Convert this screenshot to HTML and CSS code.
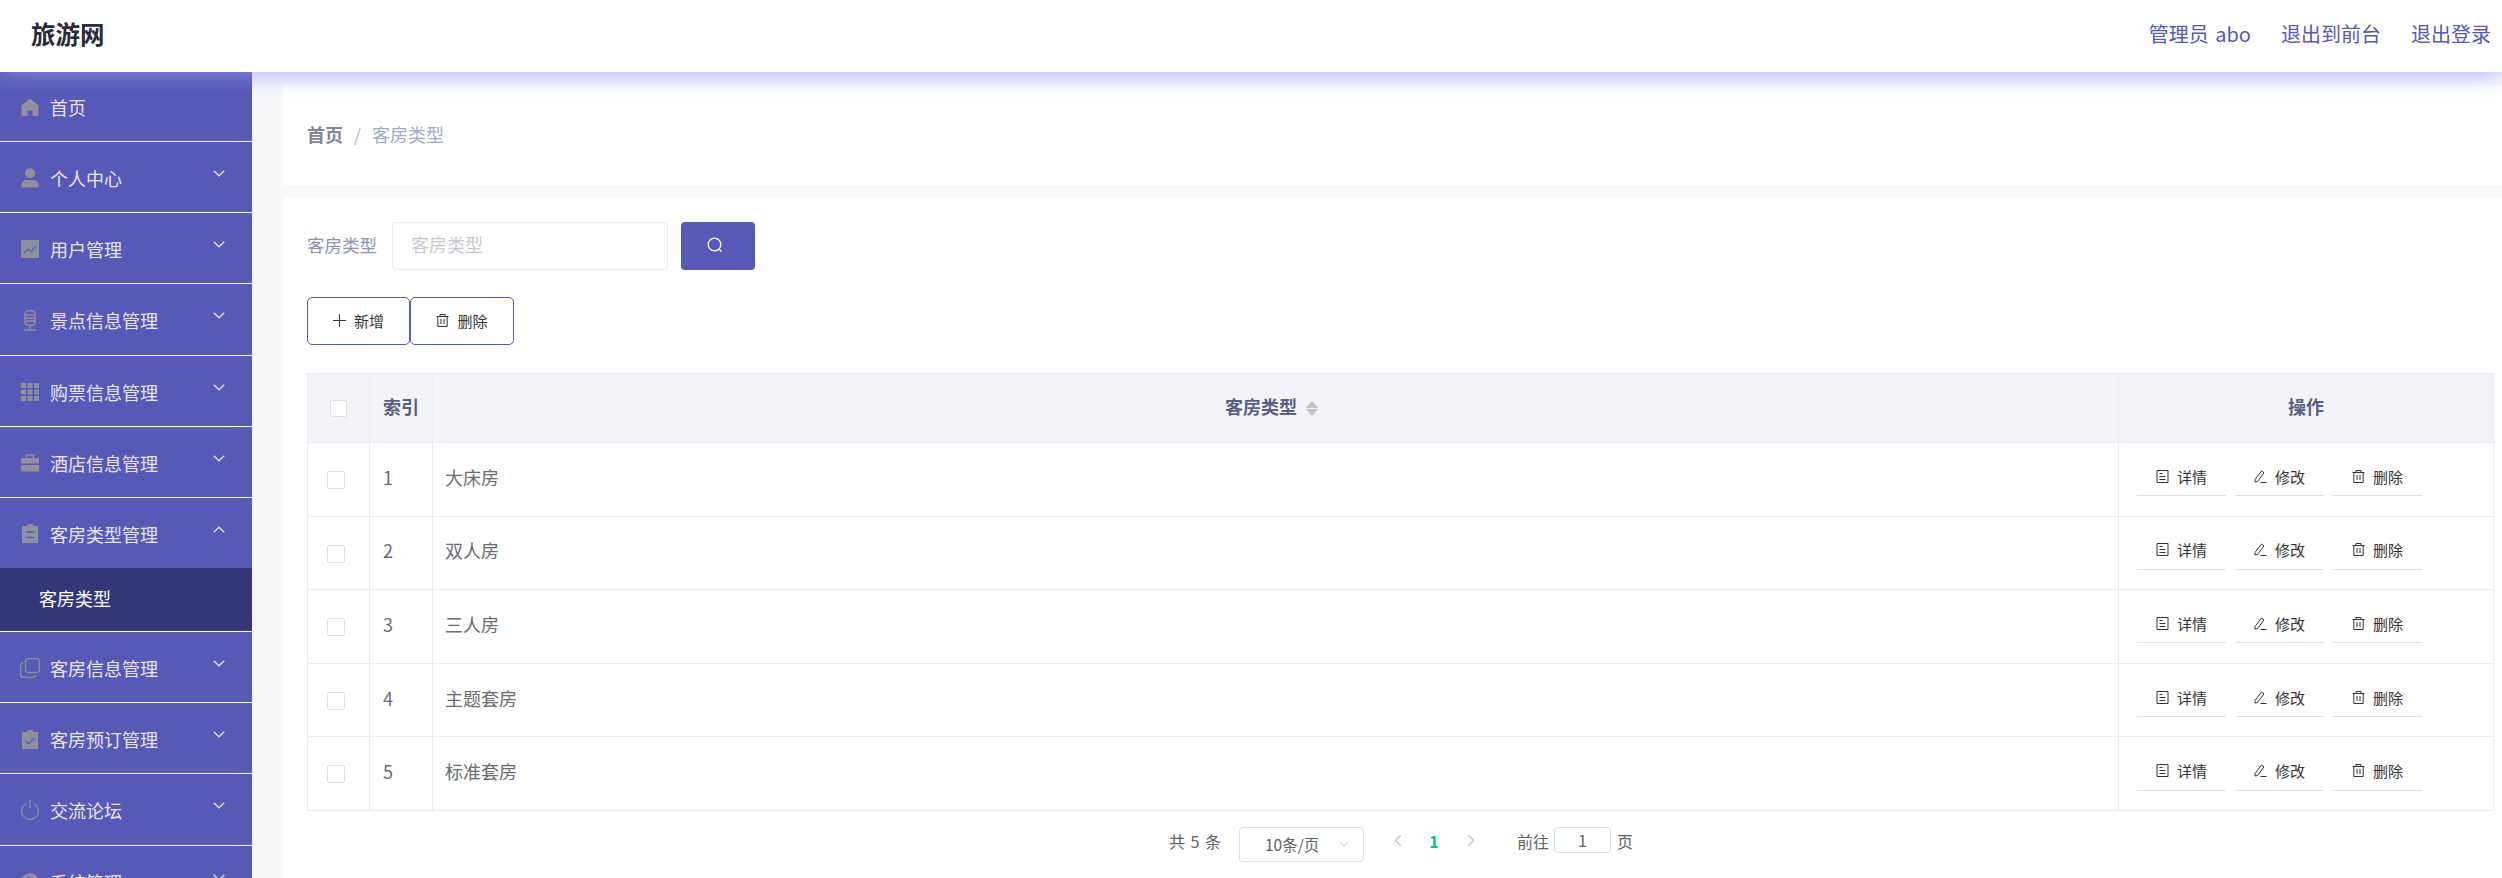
FILE: index.html
```html
<!DOCTYPE html>
<html lang="zh-CN">
<head>
<meta charset="utf-8">
<title>旅游网</title>
<link rel="stylesheet" href="styles.css">
</head>
<body>
<svg class="defs" aria-hidden="true">
  <symbol id="i-home" viewBox="0 0 18 18"><path d="M9 0.5 L17.5 7.5 V18 H11.5 V12.5 H6.5 V18 H0.5 V7.5 Z" fill="currentColor"/></symbol>
  <symbol id="i-user" viewBox="0 0 18 20"><circle cx="9" cy="5.2" r="5" fill="currentColor"/><path d="M0.5 19.5 V16.5 Q0.5 12 6 12 H12 Q17.5 12 17.5 16.5 V19.5 Z" fill="currentColor"/></symbol>
  <symbol id="i-chart" viewBox="0 0 18 18"><rect width="18" height="18" fill="currentColor"/><path d="M3 13 L7 9.5 L10 11.5 L15 6" fill="none" stroke="#5659b5" stroke-width="1.2"/></symbol>
  <symbol id="i-mic" viewBox="0 0 14 21"><rect x="2" y="0.8" width="10" height="14.4" rx="3.5" fill="none" stroke="currentColor" stroke-width="1.5"/><path d="M2 5 H12 M2 8 H12 M2 11 H12 M7 15 V19.5 M1 20 H13" fill="none" stroke="currentColor" stroke-width="1.4"/></symbol>
  <symbol id="i-grid" viewBox="0 0 18 18"><path d="M0 0h5v5H0zM6.500 0h5v5h-5zM13 0h5v5h-5zM0 6.500h5v5H0zM6.500 6.500h5v5h-5zM13 6.500h5v5h-5zM0 13h5v5H0zM6.500 13h5v5h-5zM13 13h5v5h-5z" fill="currentColor"/></symbol>
  <symbol id="i-case" viewBox="0 0 18 18"><path d="M5.500 4 V1 H12.500 V4" fill="none" stroke="currentColor" stroke-width="1.500"/><path d="M0 4 H18 V9.500 H0 Z M0 11 H18 V17.500 H0 Z" fill="currentColor"/></symbol>
  <symbol id="i-clip" viewBox="0 0 16 19"><path d="M0 2 H16 V19 H0 Z" fill="currentColor"/><rect x="5" y="0" width="6" height="4" rx="1" fill="currentColor"/><path d="M4 8 H12 M4 13.500 H12" stroke="#5659b5" stroke-width="1.300"/></symbol>
  <symbol id="i-copy" viewBox="0 0 20 20"><rect x="5.500" y="0.700" width="13.800" height="13.800" rx="2.500" fill="none" stroke="currentColor" stroke-width="1.300"/><path d="M3 5 H2.700 Q0.700 5 0.700 7 V17.300 Q0.700 19.300 2.700 19.300 H13 Q15 19.300 15 17.300 V17" fill="none" stroke="currentColor" stroke-width="1.300"/></symbol>
  <symbol id="i-check" viewBox="0 0 16 19"><path d="M0 2 H16 V19 H0 Z" fill="currentColor"/><rect x="5" y="0" width="6" height="4" rx="1" fill="currentColor"/><path d="M3.500 11 L6.800 14 L12.500 8" fill="none" stroke="#5659b5" stroke-width="1.200"/></symbol>
  <symbol id="i-power" viewBox="0 0 20 21"><path d="M5.500 4 A8.800 8.800 0 1 0 14.500 4" fill="none" stroke="currentColor" stroke-width="1.300"/><path d="M10 0 V9" fill="none" stroke="currentColor" stroke-width="1.300"/></symbol>
  <symbol id="i-sys" viewBox="0 0 18 18"><circle cx="9" cy="9" r="9" fill="currentColor"/><path d="M9 4 A5 5 0 0 0 9 14" fill="none" stroke="#5659b5" stroke-width="1.200"/></symbol>
  <symbol id="i-doc" viewBox="0 0 12 13"><path d="M0.500 0.500 H11.500 V12.500 H0.500 Z M3 3.500 H6 M3 6.500 H9 M3 9.500 H9" fill="none" stroke="currentColor" stroke-width="1"/></symbol>
  <symbol id="i-edit" viewBox="0 0 13 13"><path d="M1 9.500 L7.500 1 L10 2.800 L3.500 11.500 L1 12 Z M6.500 12.500 H12.500" fill="none" stroke="currentColor" stroke-width="1"/></symbol>
  <symbol id="i-del" viewBox="0 0 13 13"><path d="M0.500 2.500 H12.500 M4 2.500 V0.500 H9 V2.500 M1.800 2.500 V12.500 H11.200 V2.500 M5 5 V10 M8 5 V10" fill="none" stroke="currentColor" stroke-width="1"/></symbol>
  <symbol id="i-down" viewBox="0 0 12 7"><path d="M0.700 0.700 L6 5.800 L11.300 0.700" fill="none" stroke="currentColor" stroke-width="1.200"/></symbol>
</svg>

<header class="topbar">
  <div class="brand">旅游网</div>
  <nav class="top-links">
    <span class="user-name">管理员 abo</span>
    <span>退出到前台</span>
    <span>退出登录</span>
  </nav>
</header>

<div class="shell">
  <aside class="sidebar">
    <div class="menu-item"><span class="icon"><svg class="ic-18"><use href="#i-home"/></svg></span><span class="menu-text">首页</span></div>
    <div class="menu-item"><span class="icon"><svg class="ic-18 tall"><use href="#i-user"/></svg></span><span class="menu-text">个人中心</span><svg class="arrow"><use href="#i-down"/></svg></div>
    <div class="menu-item"><span class="icon"><svg class="ic-18"><use href="#i-chart"/></svg></span><span class="menu-text">用户管理</span><svg class="arrow"><use href="#i-down"/></svg></div>
    <div class="menu-item"><span class="icon"><svg class="ic-mic"><use href="#i-mic"/></svg></span><span class="menu-text">景点信息管理</span><svg class="arrow"><use href="#i-down"/></svg></div>
    <div class="menu-item"><span class="icon"><svg class="ic-18"><use href="#i-grid"/></svg></span><span class="menu-text">购票信息管理</span><svg class="arrow"><use href="#i-down"/></svg></div>
    <div class="menu-item"><span class="icon"><svg class="ic-18"><use href="#i-case"/></svg></span><span class="menu-text">酒店信息管理</span><svg class="arrow"><use href="#i-down"/></svg></div>
    <div class="menu-item open"><span class="icon"><svg class="ic-clip"><use href="#i-clip"/></svg></span><span class="menu-text">客房类型管理</span><svg class="arrow up"><use href="#i-down"/></svg></div>
    <div class="submenu-item">客房类型</div>
    <div class="menu-item"><span class="icon"><svg class="ic-20"><use href="#i-copy"/></svg></span><span class="menu-text">客房信息管理</span><svg class="arrow"><use href="#i-down"/></svg></div>
    <div class="menu-item"><span class="icon"><svg class="ic-clip"><use href="#i-check"/></svg></span><span class="menu-text">客房预订管理</span><svg class="arrow"><use href="#i-down"/></svg></div>
    <div class="menu-item"><span class="icon"><svg class="ic-20"><use href="#i-power"/></svg></span><span class="menu-text">交流论坛</span><svg class="arrow"><use href="#i-down"/></svg></div>
    <div class="menu-item"><span class="icon"><svg class="ic-18"><use href="#i-sys"/></svg></span><span class="menu-text">系统管理</span><svg class="arrow"><use href="#i-down"/></svg></div>
  </aside>

  <main class="main">
    <section class="card crumbs">
      <span class="crumb-home">首页</span><span class="crumb-sep">/</span><span class="crumb-cur">客房类型</span>
    </section>

    <section class="card content">
      <div class="search-row">
        <label class="search-label">客房类型</label>
        <div class="search-input">客房类型</div>
        <button class="search-btn" type="button">
          <svg class="search-ic" viewBox="0 0 16 16"><circle cx="7.500" cy="7.500" r="6.300" fill="none" stroke="currentColor" stroke-width="1.300"/><path d="M12 12 L14.500 14.500" stroke="currentColor" stroke-width="1.300"/></svg>
        </button>
      </div>

      <div class="action-row">
        <button class="act-btn add" type="button"><svg class="plus" viewBox="0 0 13 13"><path d="M6.500 0 V13 M0 6.500 H13" stroke="currentColor" stroke-width="1"/></svg>新增</button>
        <button class="act-btn del" type="button"><svg class="op-ic"><use href="#i-del"/></svg>删除</button>
      </div>

      <table class="grid">
        <colgroup><col class="c-check"><col class="c-idx"><col><col class="c-ops"></colgroup>
        <thead>
          <tr>
            <th class="center"><span class="checkbox head"></span></th>
            <th>索引</th>
            <th class="center">客房类型<span class="sort"><i class="tri up"></i><i class="tri down"></i></span></th>
            <th class="center">操作</th>
          </tr>
        </thead>
        <tbody>
          <tr><td class="center"><span class="checkbox"></span></td><td>1</td><td class="name">大床房</td><td class="ops"><button class="op-btn" type="button"><svg class="op-ic"><use href="#i-doc"/></svg>详情</button><button class="op-btn" type="button"><svg class="op-ic"><use href="#i-edit"/></svg>修改</button><button class="op-btn" type="button"><svg class="op-ic"><use href="#i-del"/></svg>删除</button></td></tr>
          <tr><td class="center"><span class="checkbox"></span></td><td>2</td><td class="name">双人房</td><td class="ops"><button class="op-btn" type="button"><svg class="op-ic"><use href="#i-doc"/></svg>详情</button><button class="op-btn" type="button"><svg class="op-ic"><use href="#i-edit"/></svg>修改</button><button class="op-btn" type="button"><svg class="op-ic"><use href="#i-del"/></svg>删除</button></td></tr>
          <tr><td class="center"><span class="checkbox"></span></td><td>3</td><td class="name">三人房</td><td class="ops"><button class="op-btn" type="button"><svg class="op-ic"><use href="#i-doc"/></svg>详情</button><button class="op-btn" type="button"><svg class="op-ic"><use href="#i-edit"/></svg>修改</button><button class="op-btn" type="button"><svg class="op-ic"><use href="#i-del"/></svg>删除</button></td></tr>
          <tr><td class="center"><span class="checkbox"></span></td><td>4</td><td class="name">主题套房</td><td class="ops"><button class="op-btn" type="button"><svg class="op-ic"><use href="#i-doc"/></svg>详情</button><button class="op-btn" type="button"><svg class="op-ic"><use href="#i-edit"/></svg>修改</button><button class="op-btn" type="button"><svg class="op-ic"><use href="#i-del"/></svg>删除</button></td></tr>
          <tr><td class="center"><span class="checkbox"></span></td><td>5</td><td class="name">标准套房</td><td class="ops"><button class="op-btn" type="button"><svg class="op-ic"><use href="#i-doc"/></svg>详情</button><button class="op-btn" type="button"><svg class="op-ic"><use href="#i-edit"/></svg>修改</button><button class="op-btn" type="button"><svg class="op-ic"><use href="#i-del"/></svg>删除</button></td></tr>
        </tbody>
      </table>

      <div class="pager">
        <span class="total">共 5 条</span>
        <div class="size-select"><span>10条/页</span><svg class="size-arrow"><use href="#i-down"/></svg></div>
        <svg class="page-nav" viewBox="0 0 9 14"><path d="M7.500 1 L1.500 7 L7.500 13" fill="none" stroke="currentColor" stroke-width="1.500"/></svg>
        <span class="page-num">1</span>
        <svg class="page-nav next" viewBox="0 0 9 14"><path d="M1.500 1 L7.500 7 L1.500 13" fill="none" stroke="currentColor" stroke-width="1.500"/></svg>
        <span class="goto">前往</span>
        <div class="goto-input">1</div>
        <span class="goto-end">页</span>
      </div>
    </section>
  </main>
</div>
</body>
</html>
```

FILE: styles.css
```css
* { box-sizing: border-box; }
html, body { margin: 0; height: 100%; overflow: hidden; }
body {
  font-family: "Noto Sans CJK SC", "Open Sans", "Liberation Sans", sans-serif;
  background: #f7f8fa;
  color: #606266;
}
.defs { position: absolute; width: 0; height: 0; }
button { font-family: inherit; background: #fff; cursor: pointer; }

.topbar {
  position: relative;
  z-index: 5;
  height: 72px;
  display: flex;
  align-items: center;
  justify-content: space-between;
  padding: 0 11px 0 31px;
  background: #fff;
  box-shadow: 0 0 26px rgba(150, 150, 250, 0.85);
}
.brand { font-size: 24.500px; font-weight: 700; color: #2b2b3a; padding-bottom: 5px; }
.top-links { display: flex; gap: 30px; font-size: 20px; color: #5659b5; padding-bottom: 5px; }
.user-name { word-spacing: 2px; }

.shell { display: flex; height: 806px; }

.sidebar { width: 252px; flex: none; background: #5659b5; overflow: hidden; }
.menu-item {
  height: 71.2px;
  display: flex;
  align-items: center;
  padding: 2px 0 0 21px;
  border-bottom: 1px solid #fff;
  color: #e6e6f2;
  font-size: 18px;
}
.menu-item:first-child { height: 70px; padding-top: 0; }
.menu-item.open { height: 70px; border-bottom: 0; }
.icon {
  width: 18px;
  height: 22px;
  display: flex;
  align-items: center;
  justify-content: center;
  margin-right: 11px;
  color: #8f8f9e;
  flex: none;
}
.ic-18 { width: 18px; height: 18px; flex: none; }
.ic-18.tall { height: 20px; }
.ic-mic { width: 14px; height: 21px; flex: none; }
.ic-clip { width: 16px; height: 19px; flex: none; }
.ic-20 { width: 20px; height: 20px; flex: none; }
.menu-text { flex: 1; line-height: 26px; }
.arrow { width: 12px; height: 7px; margin: -9px 27px 0 0; color: #e6e6f2; flex: none; }
.arrow.up { transform: rotate(180deg); }
.submenu-item {
  height: 64px;
  padding: 0 0 2px 39px;
  display: flex;
  align-items: center;
  background: #34367a;
  border-bottom: 1px solid #fff;
  color: #fff;
  font-size: 18px;
}

.main { flex: 1; min-width: 0; padding: 13px 0 0 30px; }
.card { background: #fff; }
.crumbs {
  height: 100px;
  margin-bottom: 12px;
  padding: 0 0 3px 25px;
  display: flex;
  align-items: center;
  font-size: 18px;
}
.crumb-home { font-weight: 700; color: #82859a; }
.crumb-sep { margin: 0 11px; color: #b4bcd0; }
.crumb-cur { color: #a4aac4; }

.content { padding: 25px 8px 0 25px; height: 700px; }
.search-row { display: flex; align-items: center; height: 48px; }
.search-label { width: 85px; font-size: 17.500px; color: #8f93b2; padding-bottom: 4px; }
.search-input {
  width: 276px;
  height: 48px;
  padding: 0 0 5px 18px;
  display: flex;
  align-items: center;
  border: 1px solid #ebebf8;
  border-radius: 4px;
  font-size: 18px;
  color: #c8c9d0;
}
.search-btn {
  width: 74px;
  height: 48px;
  margin-left: 13px;
  padding: 0 6px 2px 0;
  border: 0;
  border-radius: 4px;
  background: #5659b5;
  color: #fff;
  display: flex;
  align-items: center;
  justify-content: center;
}
.search-ic { width: 16px; height: 16px; }

.action-row { display: flex; margin-top: 27px; height: 48px; }
.act-btn {
  height: 48px;
  display: flex;
  align-items: center;
  justify-content: center;
  gap: 8px;
  padding: 0 0 2px;
  border: 1px solid #5659b5;
  border-radius: 5px;
  font-size: 15px;
  color: #333;
}
.act-btn.add { width: 103px; }
.act-btn.del { width: 104px; margin-left: 0; }
.plus { width: 13px; height: 13px; }
.op-ic { width: 13px; height: 13px; flex: none; color: #333; }

.grid {
  width: 2187px;
  margin-top: 28px;
  border-collapse: collapse;
  table-layout: fixed;
  font-size: 18px;
}
.c-check { width: 62px; }
.c-idx { width: 63px; }
.c-ops { width: 375px; }
.grid th, .grid td {
  border: 1px solid #ebecf5;
  padding: 0 0 5px 13px;
  text-align: left;
  font-weight: 400;
}
.grid th {
  height: 69px;
  background: #f4f4f8;
  font-weight: 700;
  color: #5a5e82;
}
.grid td { height: 73.600px; color: #6a6c72; }
.grid td.name { padding-left: 12px; }
.grid th.center, .grid td.center { text-align: center; padding: 0 0 5px; }
.checkbox {
  display: inline-block;
  width: 18px;
  height: 18px;
  margin: 0 5px 0 0;
  vertical-align: middle;
  border: 1px solid #dcdfe6;
  border-radius: 2px;
  background: #fff;
}
.checkbox.head { width: 17px; height: 17px; margin: 0; }
.sort {
  display: inline-flex;
  flex-direction: column;
  gap: 1px;
  margin: 0 8px 0 9px;
  vertical-align: middle;
}
.tri { display: block; width: 0; height: 0; border-left: 6.500px solid transparent; border-right: 6.500px solid transparent; }
.tri.up { border-bottom: 7px solid #c0c4cc; }
.tri.down { border-top: 7px solid #c0c4cc; }

.grid td.ops { padding: 0 0 4px 18px; }
.ops { white-space: nowrap; }
.op-btn {
  width: 89px;
  height: 36px;
  margin: 2px 9px 0 0;
  padding: 0 0 3px;
  display: inline-flex;
  align-items: center;
  justify-content: center;
  gap: 8px;
  border: 0;
  border-bottom: 1px solid #e0e0ea;
  font-size: 15px;
  color: #333;
  vertical-align: middle;
}

.pager {
  display: flex;
  align-items: center;
  margin-top: 16px;
  padding-left: 862px;
  height: 35px;
  font-size: 16px;
  color: #606266;
}
.total { width: 70px; flex: none; padding-bottom: 7px; word-spacing: 2px; }
.size-select {
  width: 125px;
  height: 35px;
  padding: 0 0 0 25px;
  display: flex;
  align-items: center;
  justify-content: space-between;
  border: 1px solid #dcdfe6;
  border-radius: 4px;
  font-size: 15.500px;
  flex: none;
}
.size-arrow { width: 10px; height: 6px; margin-right: 14px; color: #c0c4cc; }
.page-nav { width: 8px; height: 13px; margin: -8px 0 0 30px; color: #c0c4cc; flex: none; }
.page-num { width: 24px; margin-left: 20px; padding-bottom: 7px; text-align: center; font-weight: 700; color: #00c292; flex: none; }
.page-nav.next { margin-left: 21px; }
.goto { margin-left: 42px; flex: none; padding-bottom: 7px; }
.goto-input {
  width: 57px;
  height: 26px;
  margin: -8px 6px 0 5px;
  display: flex;
  align-items: center;
  justify-content: center;
  border: 1px solid #dcdfe6;
  border-radius: 4px;
  flex: none;
}
.goto-end { padding-bottom: 7px; }
```
